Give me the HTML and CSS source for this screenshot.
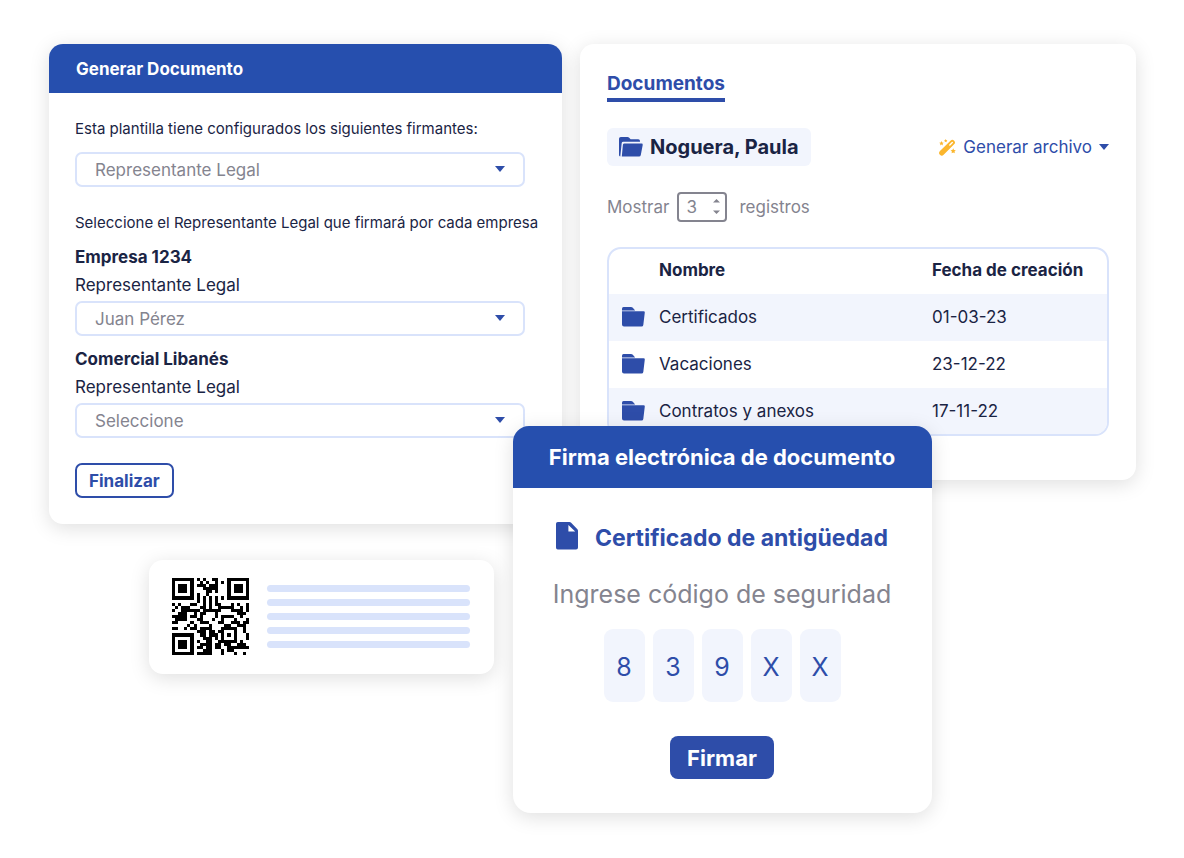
FILE: index.html
```html
<!DOCTYPE html>
<html lang="es">
<head>
<meta charset="utf-8">
<meta name="viewport" content="width=device-width, initial-scale=1">
<title>Firma de documentos</title>
<link rel="stylesheet" href="styles.css">
</head>
<body>
<svg class="symbols" aria-hidden="true">
  <symbol id="folder" viewBox="0 0 23 20">
    <path d="M0 3.400V1.500Q0 0 1.500 0H9Q10 0 10.800 .800L13.200 3.400Z"/>
    <path d="M0 4.200H21.500Q23 4.200 22.800 5.600L21.300 18Q21.100 19.600 19.500 19.600H2Q0 19.600 0 17.600Z"/>
  </symbol>
</svg>
<main class="scene">
  <div class="column">
    <form class="card">
      <h2 class="card-header">Generar Documento</h2>
      <div class="form-body">
        <label class="hint" for="firmante">Esta plantilla tiene configurados los siguientes firmantes:</label>
        <div class="select"><select id="firmante"><option>Representante Legal</option></select></div>
        <p class="hint hint-second">Seleccione el Representante Legal que firmará por cada empresa</p>
        <h3 class="company">Empresa 1234</h3>
        <label class="role" for="rep1">Representante Legal</label>
        <div class="select"><select id="rep1"><option>Juan Pérez</option></select></div>
        <h3 class="company company-next">Comercial Libanés</h3>
        <label class="role" for="rep2">Representante Legal</label>
        <div class="select"><select id="rep2"><option>Seleccione</option></select></div>
        <button class="btn-outline" type="button">Finalizar</button>
      </div>
    </form>
    <div class="card qr-card">
      <svg class="qr" viewBox="0 0 25 25" role="img" aria-label="Código QR"><path id="qr-path" shape-rendering="crispEdges"/></svg>
      <div class="lines"><i></i><i></i><i></i><i></i><i></i></div>
    </div>
  </div>

  <section class="card docs">
    <h2 class="tab">Documentos</h2>
    <div class="toolbar">
      <div class="person">
        <svg class="icon-open" viewBox="0 0 24 20" aria-hidden="true">
          <path d="M0 18V1.800Q0 0 1.800 0H8.500Q9.500 0 10.200 .800L11.600 2.300H19.200Q21 2.300 21 4.100V4.700H4.300Q2.900 4.700 2.700 6.100L1.300 19.500Q0 19.200 0 18Z"/>
          <path d="M5.400 6.500H22.600Q24 6.500 23.700 7.900L21.800 18Q21.500 19.600 20 19.600H2.800L3.900 7.800Q4.100 6.500 5.400 6.500Z"/>
        </svg>
        <h3>Noguera, Paula</h3>
      </div>
      <button class="generate" type="button">
        <svg class="wand" viewBox="0 0 17 17" aria-hidden="true">
          <path d="M2.800 13.900L13.300 3.500" stroke="#fbb62d" stroke-width="5.200" stroke-linecap="round"/>
          <path d="M10.800 5.900L13.300 3.500" stroke="#fff" stroke-width="1.400" stroke-linecap="round"/>
          <path fill="#fbb62d" d="M2.500 2l.7 1.500 1.600.2-1.200 1.100.3 1.600-1.400-.8-1.400.8.300-1.600L.2 3.700l1.600-.2zM6.700 0l.5 1.100 1.200.1-.9.900.3 1.200-1.100-.6-1.100.6.300-1.200-.9-.9 1.200-.1zM14.200 9.300l.8 1.700 1.800.2-1.300 1.200.3 1.900-1.600-.9-1.600.9.300-1.900-1.300-1.200 1.800-.2z"/>
        </svg>
        <span>Generar archivo</span><i class="caret"></i>
      </button>
    </div>
    <div class="show">
      <label for="count">Mostrar</label>
      <div class="stepper">
        <input id="count" type="number" value="3">
        <svg viewBox="0 0 7 15" aria-hidden="true"><path d="M0 3.600L3.500 0 7 3.600ZM0 11.400L3.500 15 7 11.400Z"/></svg>
      </div>
      <span>registros</span>
    </div>
    <div class="table-frame">
      <table>
        <thead><tr><th class="col-icon"></th><th>Nombre</th><th class="col-date">Fecha de creación</th></tr></thead>
        <tbody>
          <tr><td><svg class="folder"><use href="#folder"/></svg></td><td>Certificados</td><td>01-03-23</td></tr>
          <tr><td><svg class="folder"><use href="#folder"/></svg></td><td>Vacaciones</td><td>23-12-22</td></tr>
          <tr><td><svg class="folder"><use href="#folder"/></svg></td><td>Contratos y anexos</td><td>17-11-22</td></tr>
        </tbody>
      </table>
    </div>
  </section>

  <form class="card modal">
    <h2 class="modal-header">Firma electrónica de documento</h2>
    <div class="modal-body">
      <div class="doc-title">
        <svg viewBox="0 0 22 28" aria-hidden="true"><path fill-rule="evenodd" d="M1.800 0H13.500Q14.300 0 14.900 .600L21.400 7.300Q22 7.900 22 8.700V25.500Q22 27.600 20 27.600H1.800Q0 27.600 0 25.600V1.800Q0 0 1.800 0ZM12.400 3V9.600H19.200Z"/></svg>
        <h3>Certificado de antigüedad</h3>
      </div>
      <p class="prompt" id="prompt">Ingrese código de seguridad</p>
      <div class="code" role="group" aria-labelledby="prompt">
        <input type="text" maxlength="1" value="8" aria-label="Dígito 1">
        <input type="text" maxlength="1" value="3" aria-label="Dígito 2">
        <input type="text" maxlength="1" value="9" aria-label="Dígito 3">
        <input type="text" maxlength="1" value="X" aria-label="Dígito 4">
        <input type="text" maxlength="1" value="X" aria-label="Dígito 5">
      </div>
      <button class="btn-solid" type="button">Firmar</button>
    </div>
  </form>
</main>
<script src="qr.js"></script>
</body>
</html>
```
FILE: styles.css
```css
:root {
  --blue: #2e4da9;
  --header: #264fae;
  --ink: #1a2444;
  --muted: #84848f;
  --line: #d9e3fb;
  --tint: #f2f5fd;
}
* { box-sizing: border-box; }
body {
  margin: 0;
  background: #fff;
  color: var(--ink);
  font-family: Inter, "Liberation Sans", sans-serif;
  font-size: 17px;
  line-height: 24px;
}
h2, h3, p { margin: 0; }
button, input, select { font: inherit; color: inherit; }
button { cursor: pointer; }
.symbols { display: none; }
.scene {
  display: grid;
  grid-template-columns: minmax(0, 513fr) minmax(0, 556fr);
  gap: 18px;
  align-items: start;
  padding: 44px 48px 44px 49px;
}
.card {
  background: #fff;
  border-radius: 14px;
  box-shadow: 0 4px 20px rgba(0, 0, 0, .13);
}
.column { grid-area: 1 / 1; display: flex; flex-direction: column; gap: 36px; }

.card-header {
  padding: 13px 27px 12px;
  background: var(--header);
  border-radius: 14px 14px 0 0;
  color: #fff;
  font-size: 17px;
  font-weight: 700;
}
.form-body { padding: 24px 26px 26px; display: flex; flex-direction: column; }
.hint { font-size: 15px; white-space: nowrap; }
.hint-second { margin-top: 24px; }
.select { position: relative; margin: 11px 11px 0 0; }
.select::after {
  content: "";
  position: absolute;
  top: 14px;
  right: 20px;
  border: 5px solid transparent;
  border-top: 6px solid var(--blue);
  border-bottom: 0;
  pointer-events: none;
}
.select select {
  appearance: none;
  display: block;
  width: 100%;
  height: 35px;
  padding: 0 18px;
  border: 2px solid var(--line);
  border-radius: 7px;
  background: #fff;
  color: var(--muted);
}
.company { margin-top: 10px; font-size: 17px; font-weight: 700; }
.company-next { margin-top: 11px; }
.role { margin-top: 4px; }
.role + .select { margin-top: 4px; }
.btn-outline {
  align-self: flex-start;
  margin-top: 25px;
  height: 35px;
  padding: 0 12px;
  border: 2px solid var(--blue);
  border-radius: 7px;
  background: #fff;
  color: var(--blue);
  font-weight: 700;
}

.qr-card {
  display: flex;
  align-items: center;
  gap: 18px;
  margin: 0 68px 0 100px;
  padding: 18px 24px 19px 23px;
}
.qr { width: 77px; height: 77px; flex: none; }
.lines { flex: 1; display: grid; gap: 7px; }
.lines i { height: 7px; border-radius: 4px; background: var(--line); }

.docs { grid-area: 1 / 2; padding: 27px 27px 44px; }
.tab {
  display: block;
  width: fit-content;
  padding-bottom: 2px;
  border-bottom: 4px solid var(--blue);
  color: var(--blue);
  font-size: 19px;
  line-height: 25px;
  font-weight: 700;
}
.toolbar { display: flex; justify-content: space-between; align-items: center; margin-top: 26px; }
.person {
  display: flex;
  align-items: center;
  gap: 7px;
  height: 38px;
  padding: 0 12px;
  border-radius: 6px;
  background: var(--tint);
}
.person h3 { font-size: 20px; font-weight: 700; }
.icon-open { width: 24px; height: 20px; fill: var(--blue); }
.generate {
  display: flex;
  align-items: center;
  gap: 7px;
  padding: 0;
  border: 0;
  background: none;
  color: var(--blue);
}
.wand { width: 17px; height: 17px; fill: none; }
.caret { border: 5px solid transparent; border-top: 6px solid var(--blue); border-bottom: 0; }
.show { display: flex; align-items: center; gap: 8px; margin-top: 26px; color: var(--muted); }
.show > span { margin-left: 4px; }
.stepper { position: relative; }
.stepper input {
  appearance: textfield;
  display: block;
  width: 50px;
  height: 30px;
  padding: 0 7px;
  border: 2px solid var(--muted);
  border-radius: 4px;
  background: #fff;
  color: var(--muted);
}
.stepper input::-webkit-inner-spin-button { appearance: none; margin: 0; }
.stepper svg { position: absolute; top: 7px; right: 7px; width: 7px; height: 15px; fill: var(--muted); }
.table-frame {
  margin-top: 25px;
  border: 2px solid var(--line);
  border-radius: 14px;
  overflow: hidden;
}
table { width: 100%; border-collapse: collapse; table-layout: fixed; }
th, td { height: 47px; padding: 0 0 1px; text-align: left; }
tbody tr:last-child td { height: 46px; }
th { height: 45px; padding-bottom: 3px; font-weight: 700; }
.col-icon { width: 50px; }
.col-date { width: 175px; }
tbody tr:nth-child(odd) { background: var(--tint); }
.folder { display: block; width: 23px; height: 20px; margin-left: 13px; fill: var(--blue); }

.modal {
  grid-area: 1 / 1 / 2 / 3;
  justify-self: start;
  width: 419px;
  margin-top: 382px;
  margin-left: calc(50% - 80px);
  border-radius: 18px;
  z-index: 1;
}
.modal-header {
  padding: 19px 16px;
  background: var(--header);
  border-radius: 16px 16px 0 0;
  color: #fff;
  font-size: 22px;
  font-weight: 700;
  text-align: center;
}
.modal-body { display: flex; flex-direction: column; align-items: center; padding: 34px 16px; }
.doc-title { display: flex; align-items: flex-start; gap: 17px; color: var(--blue); }
.doc-title svg { width: 22px; height: 28px; fill: currentColor; }
.doc-title h3 { font-size: 23px; line-height: 32px; font-weight: 700; }
.prompt { margin-top: 24px; color: var(--muted); font-size: 25px; line-height: 32px; }
.code { display: flex; gap: 8px; margin-top: 19px; }
.code input {
  width: 41px;
  height: 73px;
  padding: 2px 0 0;
  border: 0;
  border-radius: 9px;
  background: var(--tint);
  color: var(--blue);
  font-size: 25px;
  text-align: center;
}
.btn-solid {
  margin-top: 34px;
  height: 43px;
  padding: 0 17px;
  border: 0;
  border-radius: 8px;
  background: var(--blue);
  color: #fff;
  font-size: 22px;
  font-weight: 700;
}
```
FILE: qr.js
```js
const rows = [
  "1111111010100110001111111",
  "1000001001010010101000001",
  "1011101011101110001011101",
  "1011101000111110001011101",
  "1011101000011010001011101",
  "1000001010010000001000001",
  "1111111010101010101111111",
  "0000000010101010000000000",
  "1010001100101011000101001",
  "0101110001101001111100101",
  "1001111110111111000111101",
  "0011100101100010000001110",
  "1111101101000010111100100",
  "0111100011000100100010001",
  "1100001001110001100111011",
  "0000010100001000011001110",
  "1100101101111000111110010",
  "0000000011101101100010010",
  "1111111001101110101010001",
  "1000001000111010100010001",
  "1011101010011001111110100",
  "1011101001111011011001110",
  "1011101011011011001111111",
  "1000001000111000101100000",
  "1111111011111000100010010"
];
let d = "";
rows.forEach((row, y) => {
  [...row].forEach((cell, x) => {
    if (cell === "1") d += `M${x} ${y}h1v1h-1z`;
  });
});
document.getElementById("qr-path").setAttribute("d", d);
```
